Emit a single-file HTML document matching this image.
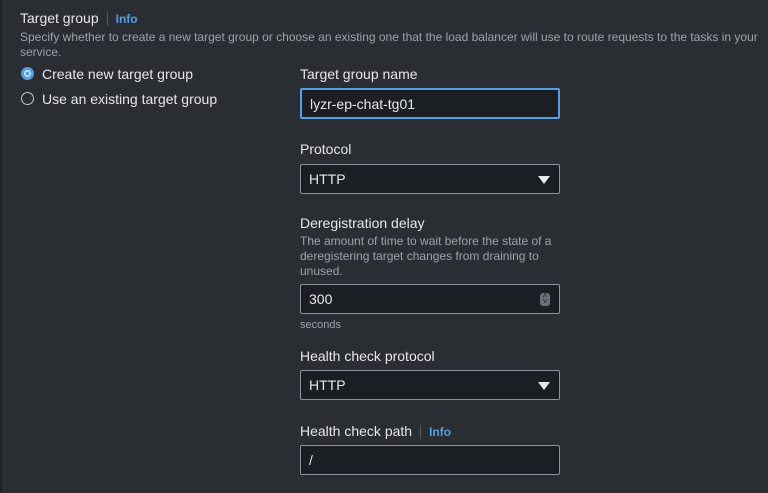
<!DOCTYPE html>
<html><head><style>
body{margin:0;width:768px;height:493px;background:#2a2d32;font-family:"Liberation Sans",sans-serif;color:#d5dbdb;position:relative;overflow:hidden}
.a{position:absolute;white-space:nowrap}
.h{font-size:14px;color:#e6e8ea}
.s{font-size:12px;color:#9ba4ae}
.info{color:#539fe5;font-weight:bold;font-size:12px}
.sep{display:inline-block;width:1px;height:14px;background:#555b63;vertical-align:middle;margin:0 8px}
.in{position:absolute;left:300px;width:260px;height:30px;background:#1b1e22;border:1px solid #8b939c;border-radius:2px;box-sizing:border-box;font-size:14px;color:#e6e8ea;padding:6px 8px}
.tri{position:absolute;right:9px;top:11px;width:0;height:0;border-left:6px solid transparent;border-right:6px solid transparent;border-top:8px solid #e6e8ea}
.r{position:absolute;left:21px;width:13px;height:13px;border-radius:50%;box-sizing:border-box}
</style></head><body>
<div style="position:absolute;left:0;top:0;width:2px;height:493px;background:#1f2226"></div>
<div class="a h" style="left:20px;top:10px">Target group<span class="sep"></span><span class="info">Info</span></div>
<div class="a s" style="left:20px;top:30px;line-height:15px;white-space:normal;width:745px">Specify whether to create a new target group or choose an existing one that the load balancer will use to route requests to the tasks in your service.</div>
<div class="r" style="top:67px;background:#539fe5;border:3.5px solid #539fe5;box-shadow:inset 0 0 0 1.5px #e6e8ea"></div>
<div class="a h" style="left:42px;top:66px">Create new target group</div>
<div class="r" style="top:92px;border:1.5px solid #c4c9ce"></div>
<div class="a h" style="left:42px;top:91px">Use an existing target group</div>

<div class="a h" style="left:300px;top:66px">Target group name</div>
<div class="in" style="top:88px;height:31px;border:2px solid #539fe5">lyzr-ep-chat-tg01</div>

<div class="a h" style="left:300px;top:141px">Protocol</div>
<div class="in" style="top:164px">HTTP<div class="tri"></div></div>

<div class="a h" style="left:300px;top:215px">Deregistration delay</div>
<div class="a s" style="left:300px;top:234px;line-height:15px;white-space:normal;width:260px">The amount of time to wait before the state of a deregistering target changes from draining to unused.</div>
<div class="in" style="top:284px">300<div style="position:absolute;right:9px;top:8px;width:10px;height:13px;border-radius:3px;background:#6a7079;color:#1b1e22;font-size:8px;line-height:6px;text-align:center">˄<br>˅</div></div>
<div class="a s" style="left:300px;top:319px;font-size:11px">seconds</div>

<div class="a h" style="left:300px;top:348px">Health check protocol</div>
<div class="in" style="top:370px">HTTP<div class="tri"></div></div>

<div class="a h" style="left:300px;top:423px">Health check path<span class="sep"></span><span class="info">Info</span></div>
<div class="in" style="top:445px">/</div>
</body></html>
